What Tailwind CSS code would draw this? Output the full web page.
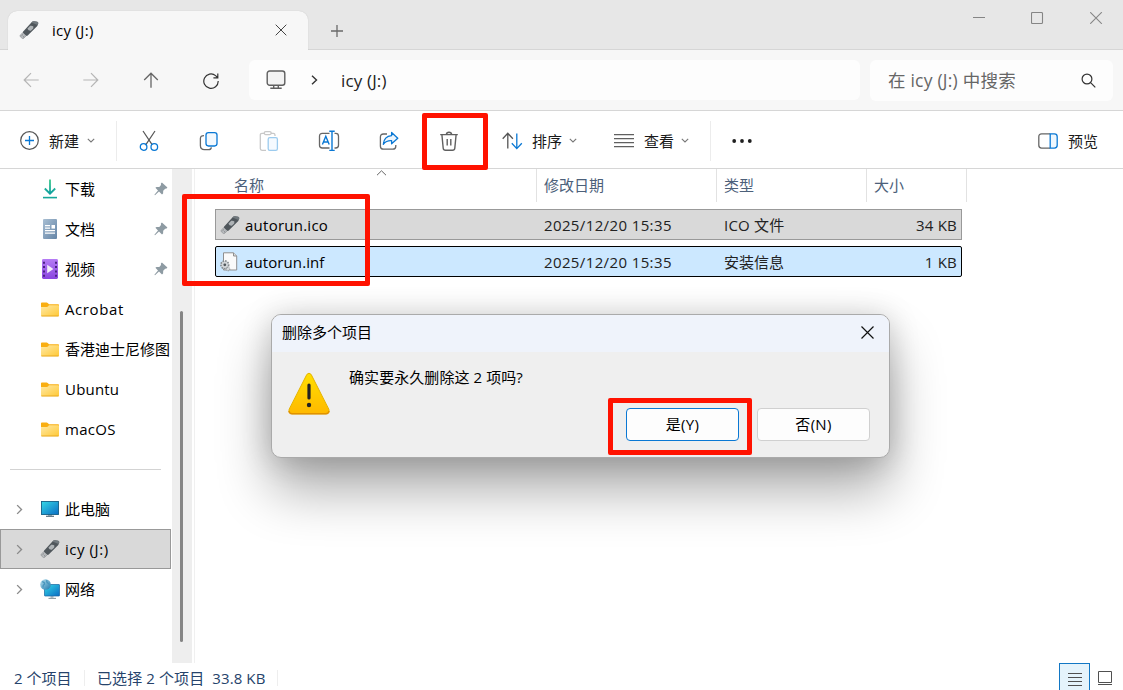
<!DOCTYPE html>
<html lang="zh-CN">

<head>
    <meta charset="UTF-8">
    <meta name="viewport" content="width=device-width, initial-scale=1.0">
    <title>icy (J:)</title>
    <script src="https://cdn.jsdelivr.net/npm/@tailwindcss/browser@4"></script>
</head>

<body class="bg-white overflow-hidden font-['Open_Sans','Noto_Sans_CJK_SC',sans-serif] text-[15px] text-black whitespace-nowrap">
    <!-- shared icons -->
    <svg class="absolute w-0 h-0">
        <defs>
            <linearGradient id="gFolder" x1="0" y1="0" x2="1" y2="1">
                <stop offset="0" stop-color="#ffe9a6" />
                <stop offset="1" stop-color="#ffc937" />
            </linearGradient>
            <linearGradient id="gScreen" x1="0" y1="0" x2="1" y2="1">
                <stop offset="0" stop-color="#35d8e6" />
                <stop offset="1" stop-color="#0a6cc4" />
            </linearGradient>
            <linearGradient id="gDown" x1="0" y1="0" x2="0" y2="1">
                <stop offset="0" stop-color="#3cc98a" />
                <stop offset="1" stop-color="#0e9fa0" />
            </linearGradient>
            <linearGradient id="gDoc" x1="0" y1="0" x2="1" y2="1">
                <stop offset="0" stop-color="#a9bfd3" />
                <stop offset="1" stop-color="#6484a6" />
            </linearGradient>
            <linearGradient id="gVideo" x1="0" y1="0" x2="0" y2="1">
                <stop offset="0" stop-color="#b57cf5" />
                <stop offset="1" stop-color="#8a45e0" />
            </linearGradient>
            <linearGradient id="gWarn" x1="0" y1="0" x2="0" y2="1">
                <stop offset="0" stop-color="#ffdf00" />
                <stop offset="1" stop-color="#ffb900" />
            </linearGradient>
            <linearGradient id="gGlobe" x1="0" y1="0" x2="1" y2="1">
                <stop offset="0" stop-color="#b9e2f0" />
                <stop offset="1" stop-color="#1d78ac" />
            </linearGradient>
        </defs>
        <symbol id="usb" viewBox="0 0 20 20">
            <path d="M1.2 15.2 4.6 11.8 8.1 15 4.6 18.4Q3.6 18.9 2.8 18L1.2 16.6Q.7 15.9 1.2 15.2Z" fill="#b9bcbf" stroke="#85888b" stroke-width=".6" />
            <path d="M2.7 15.6 3.6 14.8M4.3 17 5.2 16.2" stroke="#686b6e" stroke-width="1" />
            <path d="M4.2 11.6 12.4 2.6Q13.3 1.3 15 1.3L18.2 1.8Q19.6 2.2 19.2 3.7L18.3 5.9 8.7 15.6Q7.7 16.2 6.7 15.2L4.5 13.3Q3.6 12.5 4.2 11.6Z" fill="#50575c" />
            <path d="M12.4 2.6Q13.3 1.3 15 1.3L18.2 1.8Q19.6 2.2 19.2 3.7L18.6 5Z" fill="#71797e" />
            <path d="M8.4 8.8 11.2 5.8Q13 5.4 14.4 6.4L14.2 8.4 11.8 10.8Q9.4 11 8.4 8.8Z" fill="#aeb3b6" />
        </symbol>
        <symbol id="folder" viewBox="0 0 18 15">
            <path d="M0 1.3Q0 .4.9.4H5.6Q6.2.4 6.7.9L8 2.2H17.2Q18 2.2 18 3V7H0Z" fill="#f9ae12" />
            <path d="M0 5H5.8Q6.6 5 7.2 4.3L8 3.2H17.2Q18 3.2 18 4V13.4Q18 14.2 17.2 14.2H.8Q0 14.2 0 13.4Z" fill="url(#gFolder)" />
            <path d="M.4 14H17.6" stroke="#e7a51b" stroke-width=".9" />
        </symbol>
        <symbol id="pin" viewBox="0 0 14 14">
            <path d="M7.9.6 13.4 5.5 12.6 6.6 11.2 6.7 9.2 8.8 9.1 11.6 8 12.4 5 9.6 1 13.2.4 12.8 4 8.6 1.4 5.7 2.5 4.9 5.3 5 7 3.1 6.9 1.6Z" fill="#8e9ba3" />
        </symbol>
        <symbol id="more" viewBox="0 0 8 12">
            <path d="M1.3 1 6.3 6 1.3 11" fill="none" stroke="#8a8a8a" stroke-width="1.6" />
        </symbol>
        <symbol id="down" viewBox="0 0 8 5">
            <path d="M.8.8 4 4 7.2.8" fill="none" stroke="#777" stroke-width="1.1" />
        </symbol>
    </svg>

    <div class="relative w-[1123px] h-[690px] flex flex-col overflow-hidden">
        <!-- title bar -->
        <div class="h-[50px] shrink-0 bg-[#e7e7e7] border-b border-[#d6d6d6] flex items-start">
            <div class="ml-2 mt-[11px] w-[300px] h-[39px] bg-[#f7f7f7] rounded-t-[9px] flex items-center pl-[11px] pr-[21px] relative shadow-[0_0_1px_#bbb]">
                <svg class="w-5 h-5 -mt-px"><use href="#usb" /></svg>
                <span class="ml-[13px] tracking-[0.3px]">icy (J:)</span>
                <svg class="ml-auto -mt-px w-3 h-3" viewBox="0 0 12 12"><path d="M.7.7 11.3 11.3M11.3.7.7 11.3" stroke="#444" stroke-width="1" /></svg>
                <div class="absolute left-0 bottom-[-2px] w-full h-[3px] bg-[#f7f7f7]"></div>
            </div>
            <svg class="ml-[22px] mt-[24px] w-[14px] h-[14px]" viewBox="0 0 14 14"><path d="M1 7H13M7 1V13" stroke="#6a6a6a" stroke-width="1.3" /></svg>
            <div class="ml-auto flex gap-[46px] pr-[20px] pt-[12px]">
                <svg class="w-3 h-3" viewBox="0 0 12 12"><path d="M0 5.5H12" stroke="#858585" /></svg>
                <svg class="w-[13px] h-3" viewBox="0 0 13 12"><rect x=".5" y=".5" width="11" height="11" rx="1" fill="none" stroke="#858585" stroke-width="1.1" /></svg>
                <svg class="w-[13px] h-3" viewBox="0 0 13 12"><path d="M.2.2 11.8 11.8M11.8.2.2 11.8" stroke="#858585" stroke-width="1.1" /></svg>
            </div>
        </div>

        <!-- navigation -->
        <div class="h-[61px] shrink-0 bg-[#f7f7f7] border-b border-[#d6d6d6] flex items-start pt-[10px]">
            <div class="w-[249px] h-10 flex items-center pl-[23px] gap-11">
                <svg class="w-4 h-4" viewBox="0 0 16 16" fill="none" stroke="#b5b5b5" stroke-width="1.2"><path d="M15.7 8H1.2M8 1.2 1.2 8 8 14.8" /></svg>
                <svg class="w-4 h-4" viewBox="0 0 16 16" fill="none" stroke="#b5b5b5" stroke-width="1.2"><path d="M.3 8H14.8M8 1.2 14.8 8 8 14.8" /></svg>
                <svg class="w-4 h-4" viewBox="0 0 16 16" fill="none" stroke="#666" stroke-width="1.3"><path d="M8 15.7V1.2M1.2 8 8 1.2 14.8 8" /></svg>
                <svg class="w-4 h-4 mt-px" viewBox="0 0 16 16" fill="none" stroke="#333" stroke-width="1.2"><path d="M15.2 8A7.2 7.2 0 1 1 12.6 2.6L14.6 4.6M14.8.6V4.8H10.4" /></svg>
            </div>
            <div class="w-[611px] h-10 bg-[#fdfdfd] rounded-md flex items-center pl-[17px]">
                <svg class="w-5 h-5 -mt-px" viewBox="0 0 20 20" fill="none" stroke="#5f5f5f" stroke-width="1.4"><rect x="1.2" y="1" width="17.6" height="14.2" rx="2.5" fill="#f3f3f3" /><path d="M7.7 15.5V18M12.3 15.5V18M4.3 18.3H15.7" /></svg>
                <svg class="ml-[25px] w-[7px] h-[10px]" viewBox="0 0 7 10" fill="none" stroke="#333" stroke-width="1.4"><path d="M1 .8 5.5 5 1 9.2" /></svg>
                <span class="ml-[23px] mt-px text-[17px] tracking-[0.15px] text-[#222]">icy (J:)</span>
            </div>
            <div class="ml-[10px] w-[243px] h-[41px] bg-[#fdfdfd] rounded-md flex items-center pl-[18px] pr-[17px] text-[17.5px] text-[#666]">
                <span class="tracking-[0.22px]">在 icy (J:) 中搜索</span>
                <svg class="ml-auto w-[15px] h-[15px]" viewBox="0 0 15 15" fill="none" stroke="#333" stroke-width="1.2"><circle cx="6" cy="6" r="4.9" /><path d="M9.6 9.6 14.3 14.3" /></svg>
            </div>
        </div>

        <!-- command bar -->
        <div class="h-[58px] shrink-0 border-b border-[#d6d6d6] flex items-center pt-[2px] text-[#1a1a1a]">
            <div class="w-[116px] flex items-center pl-5">
                <svg class="w-[19px] h-[19px] -mt-px" viewBox="0 0 19 19" fill="none"><circle cx="9.5" cy="9.5" r="8.8" stroke="#555" stroke-width="1.2" /><path d="M5 9.5H14M9.5 5V14" stroke="#0a78d4" stroke-width="1.3" /></svg>
                <span class="ml-[10px] mt-px">新建</span>
                <svg class="ml-2 w-2 h-[5px]"><use href="#down" /></svg>
            </div>
            <div class="w-px h-[40px] bg-[#ececec]"></div>
            <div class="ml-[2px] flex">
                <div class="w-[60px] flex justify-center">
                    <svg class="w-5 h-[22px]" viewBox="0 0 20 22" fill="none"><path d="M4 1 13.1 14.6M16 1 6.9 14.6" stroke="#555" stroke-width="1.2" /><circle cx="4.6" cy="17" r="3.3" stroke="#0a78d4" stroke-width="1.3" /><circle cx="15.3" cy="17" r="3.3" stroke="#0a78d4" stroke-width="1.3" /></svg>
                </div>
                <div class="w-[60px] flex justify-center">
                    <svg class="w-5 h-[22px]" viewBox="0 0 20 22" fill="none" stroke-width="1.3"><path d="M5 5.6Q1.4 5.6 1.4 8.6V15.5Q1.4 19.6 5.4 19.6H9.6Q12 19.6 12.4 17.3" stroke="#666" /><rect x="7" y="2.6" width="11" height="13.4" rx="2.4" stroke="#0a78d4" fill="#f3f9fe" /></svg>
                </div>
                <div class="w-[60px] flex justify-center">
                    <svg class="w-5 h-[22px]" viewBox="0 0 20 22" fill="none" stroke-width="1.3"><path d="M5.5 3.3H3Q1.3 3.3 1.3 5V18.6Q1.3 20.3 3 20.3H7M12 3.3H14.2Q16 3.3 16 5V6" stroke="#c8c8c8" /><rect x="5.2" y="1.6" width="7" height="3" rx="1.5" stroke="#c8c8c8" /><rect x="9.2" y="7.7" width="9.2" height="12.7" rx="1.6" stroke="#9ccbee" fill="#f5faff" /></svg>
                </div>
                <div class="w-[60px] flex justify-center">
                    <svg class="w-[22px] h-[22px]" viewBox="0 0 22 22" fill="none" stroke-width="1.3"><path d="M11.5 3.4H4.3Q1.5 3.4 1.5 6.2V15.2Q1.5 18 4.3 18H11.5M16.5 3.4H17.7Q20.5 3.4 20.5 6.2V15.2Q20.5 18 17.7 18H16.5" stroke="#666" /><path d="M4.4 14.6 7.8 6.3 11.2 14.6M5.6 12H10M14 1.5V20M11.3 1.2H16.7M11.3 20.4H16.7" stroke="#0a78d4" stroke-width="1.4" /></svg>
                </div>
                <div class="w-[60px] flex justify-center">
                    <svg class="w-5 h-[22px]" viewBox="0 0 20 22" fill="none" stroke-width="1.3"><path d="M8 4H4.5Q1.4 4 1.4 7V16.2Q1.4 19.2 4.5 19.2H13.7Q16.8 19.2 16.8 16.2V15" stroke="#666" /><path d="M12.6 2.5 18.8 8.2 12.6 13.7V10.7Q7.7 10.3 4.3 14.2 5 6.3 12.6 5.6Z" stroke="#0a78d4" fill="#eef6fd" stroke-linejoin="round" /></svg>
                </div>
                <div class="w-[60px] flex justify-center">
                    <svg class="w-5 h-[22px]" viewBox="0 0 20 22" fill="none" stroke="#606060" stroke-width="1.4"><path d="M1.2 4.6H18.8M7.4 4.4Q7.6 2.2 10 2.2 12.4 2.2 12.6 4.4M2.9 4.8 4.2 18.2Q4.4 20.3 6.5 20.3H13.5Q15.6 20.3 15.8 18.2L17.1 4.8M8.2 9V15.6M11.8 9V15.6" /></svg>
                </div>
            </div>
            <div class="ml-[23px] flex items-center">
                <svg class="w-[21px] h-[18px]" viewBox="0 0 21 18" fill="none" stroke-width="1.3"><path d="M5.8 16.5V1.5M.7 6.8 5.8 1.3 10.9 6.8" stroke="#555" /><path d="M14.8 1.5V16.5M9.8 11.2 14.8 16.6 19.8 11.2" stroke="#0a78d4" /></svg>
                <span class="ml-[9px] mt-px">排序</span>
                <svg class="ml-[7px] w-2 h-[5px]"><use href="#down" /></svg>
            </div>
            <div class="ml-[37px] flex items-center">
                <svg class="w-5 h-[14px]" viewBox="0 0 20 14" stroke="#606060" stroke-width="1.2"><path d="M0 .6H20M0 4.6H20M0 8.6H20M0 12.6H20" /></svg>
                <span class="ml-[10px] mt-px">查看</span>
                <svg class="ml-[7px] w-2 h-[5px]"><use href="#down" /></svg>
            </div>
            <div class="ml-[21px] w-px h-[40px] bg-[#ececec]"></div>
            <svg class="ml-[20.5px] mt-px w-5 h-1" viewBox="0 0 20 4" fill="#1f1f1f"><circle cx="2.2" cy="2" r="1.9" /><circle cx="10" cy="2" r="1.9" /><circle cx="17.8" cy="2" r="1.9" /></svg>
            <div class="ml-auto flex items-center pr-[25px]">
                <svg class="w-5 h-4" viewBox="0 0 20 16" fill="none" stroke-width="1.3"><path d="M12.2.9H3.6Q.8.9.8 3.7V12.3Q.8 15.1 3.6 15.1H12.2" stroke="#666" /><path d="M12.2.9H16.4Q19.2.9 19.2 3.7V12.3Q19.2 15.1 16.4 15.1H12.2Z" stroke="#0a78d4" fill="#eef7fe" /></svg>
                <span class="ml-[10px] mt-px">预览</span>
            </div>
        </div>

        <!-- content -->
        <div class="h-[494px] shrink-0 flex">
            <div class="w-[172px] shrink-0 flex flex-col overflow-hidden">
                <div class="h-10 flex items-center pl-10">
                    <svg class="w-[20px] h-5" viewBox="0 0 20 20" fill="none" stroke="url(#gDown)" stroke-width="1.8"><path d="M10 .4 10.01 14.5M4.8 9.5 10 14.7 15.2 9.5" /><path d="M3 18.6H17" stroke="#16a79a" stroke-width="1.6" /></svg>
                    <span class="ml-[5px]">下载</span>
                    <svg class="ml-auto mr-[4px] w-[14px] h-[14px]"><use href="#pin" /></svg>
                </div>
                <div class="h-10 flex items-center pl-10">
                    <svg class="w-5 h-5" viewBox="0 0 20 20"><rect x="3" width="14" height="20" rx="1" fill="url(#gDoc)" /><path d="M5 6.6H10M5 9.2H10M5 11.7H15M5 14.2H15" stroke="#fff" stroke-width="1.2" /><path d="M11.5 6H15V9.6H11.5Z" fill="#fff" /></svg>
                    <span class="ml-[5px]">文档</span>
                    <svg class="ml-auto mr-[4px] w-[14px] h-[14px]"><use href="#pin" /></svg>
                </div>
                <div class="h-10 flex items-center pl-10">
                    <svg class="w-5 h-5" viewBox="0 0 20 20"><rect x="2" width="16" height="20" rx="1.4" fill="url(#gVideo)" /><path d="M4 2.8V18M16 2.8V18" stroke="#4b2383" stroke-width="2" stroke-dasharray="2 2.3" /><path d="M7.2 5.8 13.4 10 7.2 14.2Z" fill="#f2eef8" /></svg>
                    <span class="ml-[5px]">视频</span>
                    <svg class="ml-auto mr-[4px] w-[14px] h-[14px]"><use href="#pin" /></svg>
                </div>
                <div class="h-10 flex items-center pl-[41px]">
                    <svg class="w-[18px] h-[15px]"><use href="#folder" /></svg>
                    <span class="ml-[6px] tracking-[0.6px]">Acrobat</span>
                </div>
                <div class="h-10 flex items-center pl-[41px]">
                    <svg class="w-[18px] h-[15px] shrink-0"><use href="#folder" /></svg>
                    <span class="ml-[6px]">香港迪士尼修图</span>
                </div>
                <div class="h-10 flex items-center pl-[41px]">
                    <svg class="w-[18px] h-[15px]"><use href="#folder" /></svg>
                    <span class="ml-[6px] tracking-[0.2px]">Ubuntu</span>
                </div>
                <div class="h-10 flex items-center pl-[41px]">
                    <svg class="w-[18px] h-[15px]"><use href="#folder" /></svg>
                    <span class="ml-[6px] tracking-[0.3px]">macOS</span>
                </div>
                <div class="h-10 flex items-center pl-[10px]">
                    <div class="w-[151px] h-px bg-[#d3d3d3]"></div>
                </div>
                <div class="h-10 flex items-center pl-4">
                    <svg class="w-[7px] h-[11px]"><use href="#more" /></svg>
                    <svg class="ml-[18px] w-[18px] h-4" viewBox="0 0 18 16"><path d="M7 13H11V15H7Z" fill="#9fb0bb" /><path d="M5 15.3H13" stroke="#596f7d" stroke-width="1.2" /><rect x=".5" y=".5" width="17" height="13" fill="url(#gScreen)" stroke="#135f86" stroke-width=".9" /></svg>
                    <span class="ml-[6px]">此电脑</span>
                </div>
                <div class="h-10 w-[171px] flex items-center pl-[15px] bg-[#d9d9d9] border border-[#999]">
                    <svg class="w-[7px] h-[11px]"><use href="#more" /></svg>
                    <svg class="ml-[17px] w-5 h-5"><use href="#usb" /></svg>
                    <span class="ml-[5px] tracking-[0.55px]">icy (J:)</span>
                </div>
                <div class="h-10 flex items-center pl-4">
                    <svg class="w-[7px] h-[11px]"><use href="#more" /></svg>
                    <svg class="ml-[17px] w-5 h-5" viewBox="0 0 20 20"><path d="M10.5 17H13.5V19H10.5Z" fill="#b9c2c8" /><path d="M8.5 19.4H16" stroke="#8d9aa3" stroke-width="1.1" /><rect x="4.5" y="5.5" width="15" height="11.5" rx=".5" fill="url(#gScreen)" stroke="#1766a0" stroke-width=".7" /><circle cx="5.5" cy="5.5" r="5.3" fill="url(#gGlobe)" /><path d="M2.2 2.6Q4.8 3 4.5 5.2 2.7 5.8 3.1 8.5M7 1Q6 3 8 4.2T10 7.5" fill="none" stroke="#4795bd" stroke-width="1.2" /></svg>
                    <span class="ml-[5px]">网络</span>
                </div>
            </div>
            <div class="w-5 shrink-0 bg-[#eee] pl-2 pt-[142px]">
                <div class="w-[3px] h-[331px] rounded-full bg-[#858585]"></div>
            </div>
            <div class="ml-[2px] border-l border-[#f0f0f0] flex-1 flex flex-col">
                <!-- column headers -->
                <div class="h-[33px] flex text-[#4c607a] relative">
                    <div class="w-[342px] border-r border-[#e2e2e2] pl-[39px] pt-[5px]">名称</div>
                    <div class="w-[180px] border-r border-[#e2e2e2] pl-[7px] pt-[5px]">修改日期</div>
                    <div class="w-[150px] border-r border-[#e2e2e2] pl-[7px] pt-[5px]">类型</div>
                    <div class="w-[100px] border-r border-[#e2e2e2] pl-[7px] pt-[5px]">大小</div>
                    <svg class="absolute left-[181px] top-[1px] w-[11px] h-[6px]" viewBox="0 0 11 6"><path d="M1 5.2 5.5.8 10 5.2" fill="none" stroke="#666" /></svg>
                </div>
                <div class="mt-[7px] ml-5 w-[747px] h-[31px] bg-[#d9d9d9] border border-[#999] flex items-center pt-px text-[#222]">
                    <svg class="ml-1 w-5 h-5 -mt-px"><use href="#usb" /></svg>
                    <span class="w-[304px] pl-[5px] tracking-[0.25px] text-black">autorun.ico</span>
                    <span class="w-[180px] tracking-[0.38px]">2025/12/20 15:35</span>
                    <span class="tracking-[0.2px]">ICO 文件</span>
                    <span class="ml-auto mr-[4px] tracking-[0.2px]">34 KB</span>
                </div>
                <div class="mt-[6px] ml-5 w-[747px] h-[31px] bg-[#cce8ff] border border-black rounded-[2px] flex items-center pt-px text-[#222]">
                    <svg class="ml-1 w-5 h-5 -mt-px" viewBox="0 0 20 20"><path d="M3.5 .8H13.5L16.7 4V18H3.5Z" fill="#fafafa" stroke="#8f8f8f" /><path d="M13.5 .8V4H16.7" fill="#ddd" stroke="#8f8f8f" /><circle cx="4.8" cy="12.8" r="3.9" fill="#d3d7da" stroke="#868c90" stroke-width="1.6" stroke-dasharray="1.6 1" /><circle cx="4.8" cy="12.8" r="1.4" fill="#50575c" /><circle cx="8" cy="17" r="1.8" fill="#d3d7da" stroke="#868c90" stroke-dasharray="1 .7" /></svg>
                    <span class="w-[304px] pl-[5px] tracking-[0.1px] text-black">autorun.inf</span>
                    <span class="w-[180px] tracking-[0.38px]">2025/12/20 15:35</span>
                    <span>安装信息</span>
                    <span class="ml-auto mr-[4px] tracking-[0.2px]">1 KB</span>
                </div>
            </div>
        </div>

        <!-- status bar -->
        <div class="h-[27px] flex items-center text-[#26436b]">
            <span class="w-[84px] pl-[14px] mt-[3px]">2 个项目</span>
            <div class="w-px h-4 mt-[3px] bg-[#eee]"></div>
            <span class="ml-[12px] mt-[3px] tracking-[0.1px]">已选择 2 个项目</span>
            <span class="ml-[8px] mt-[3px] tracking-[0.1px]">33.8 KB</span>
            <div class="ml-[12px] w-px h-4 mt-[3px] bg-[#eee]"></div>
            <div class="ml-auto self-start w-[31px] h-[29px] bg-[#e5f3fb] border border-[#1277c4] flex justify-center pt-[9px]">
                <svg class="w-[14px] h-[14px]" viewBox="0 0 14 14" stroke="#505050"><path d="M0 .5H14M0 4.5H14M0 8.5H14M0 12.5H14" /></svg>
            </div>
            <svg class="ml-2 mr-[11px] self-start mt-2 w-[14px] h-[14px]" viewBox="0 0 14 14" fill="none" stroke="#505050"><path d="M.5.5H13.5V11.5H.5ZM0 13.5H14" /></svg>
        </div>

        <!-- confirm dialog -->
        <div class="absolute left-[271px] top-[314px] w-[619px] h-[144px] bg-[#efefef] border border-[#aaa] rounded-[10px] flex flex-col shadow-[0_32px_54px_rgba(0,0,0,0.33),0_2px_30px_rgba(0,0,0,0.18)]">
            <div class="h-[37px] shrink-0 bg-[#eff3fb] rounded-t-[9px] flex items-center pb-[3px] pl-[10px] pr-[15px]">
                <span>删除多个项目</span>
                <svg class="ml-auto mt-px w-[13px] h-[13px]" viewBox="0 0 13 13"><path d="M.5.5 12.5 12.5M12.5.5.5 12.5" stroke="#111" stroke-width="1.2" /></svg>
            </div>
            <div class="h-[56px] shrink-0 flex items-start">
                <svg class="ml-4 mt-5 w-[42px] h-[43px] shrink-0" viewBox="0 0 42 43"><path d="M18.8 2.5Q21 -.2 23.2 2.5L40.8 37.2Q42 41.3 38 41.8H4Q0 41.3 1.2 37.2Z" fill="url(#gWarn)" stroke="#e6b400" stroke-width="1" /><path d="M1 39Q1.2 41.6 4 41.8H38Q40.8 41.6 41 39" fill="none" stroke="#e09200" stroke-width="1.4" /><path d="M21 13V26" stroke="#222" stroke-width="3.2" stroke-linecap="round" /><circle cx="21" cy="33" r="2.2" fill="#222" /></svg>
                <span class="ml-[19px] mt-[14px] tracking-[0.07px]">确实要永久删除这 2 项吗?</span>
            </div>
            <div class="h-[33px] shrink-0 mr-[19px] flex justify-end gap-[18px]">
                <button class="w-[113px] bg-[#fdfdfd] border border-[#0a78d4] rounded pb-px tracking-[0.3px]">是(Y)</button>
                <button class="w-[113px] bg-[#fdfdfd] border border-[#d0d0d0] rounded pb-px tracking-[0.3px]">否(N)</button>
            </div>
        </div>

        <!-- highlight boxes -->
        <div class="absolute left-[422px] top-[113px] w-[66px] h-[57px] border-[5px] border-[#ff1200] rounded-[2px]"></div>
        <div class="absolute left-[182px] top-[194px] w-[188px] h-[92px] border-[5px] border-[#ff1200] rounded-[2px]"></div>
        <div class="absolute left-[608px] top-[398px] w-[144px] h-[57px] border-[5px] border-[#ff1200] rounded-[2px]"></div>
    </div>
</body>

</html>
